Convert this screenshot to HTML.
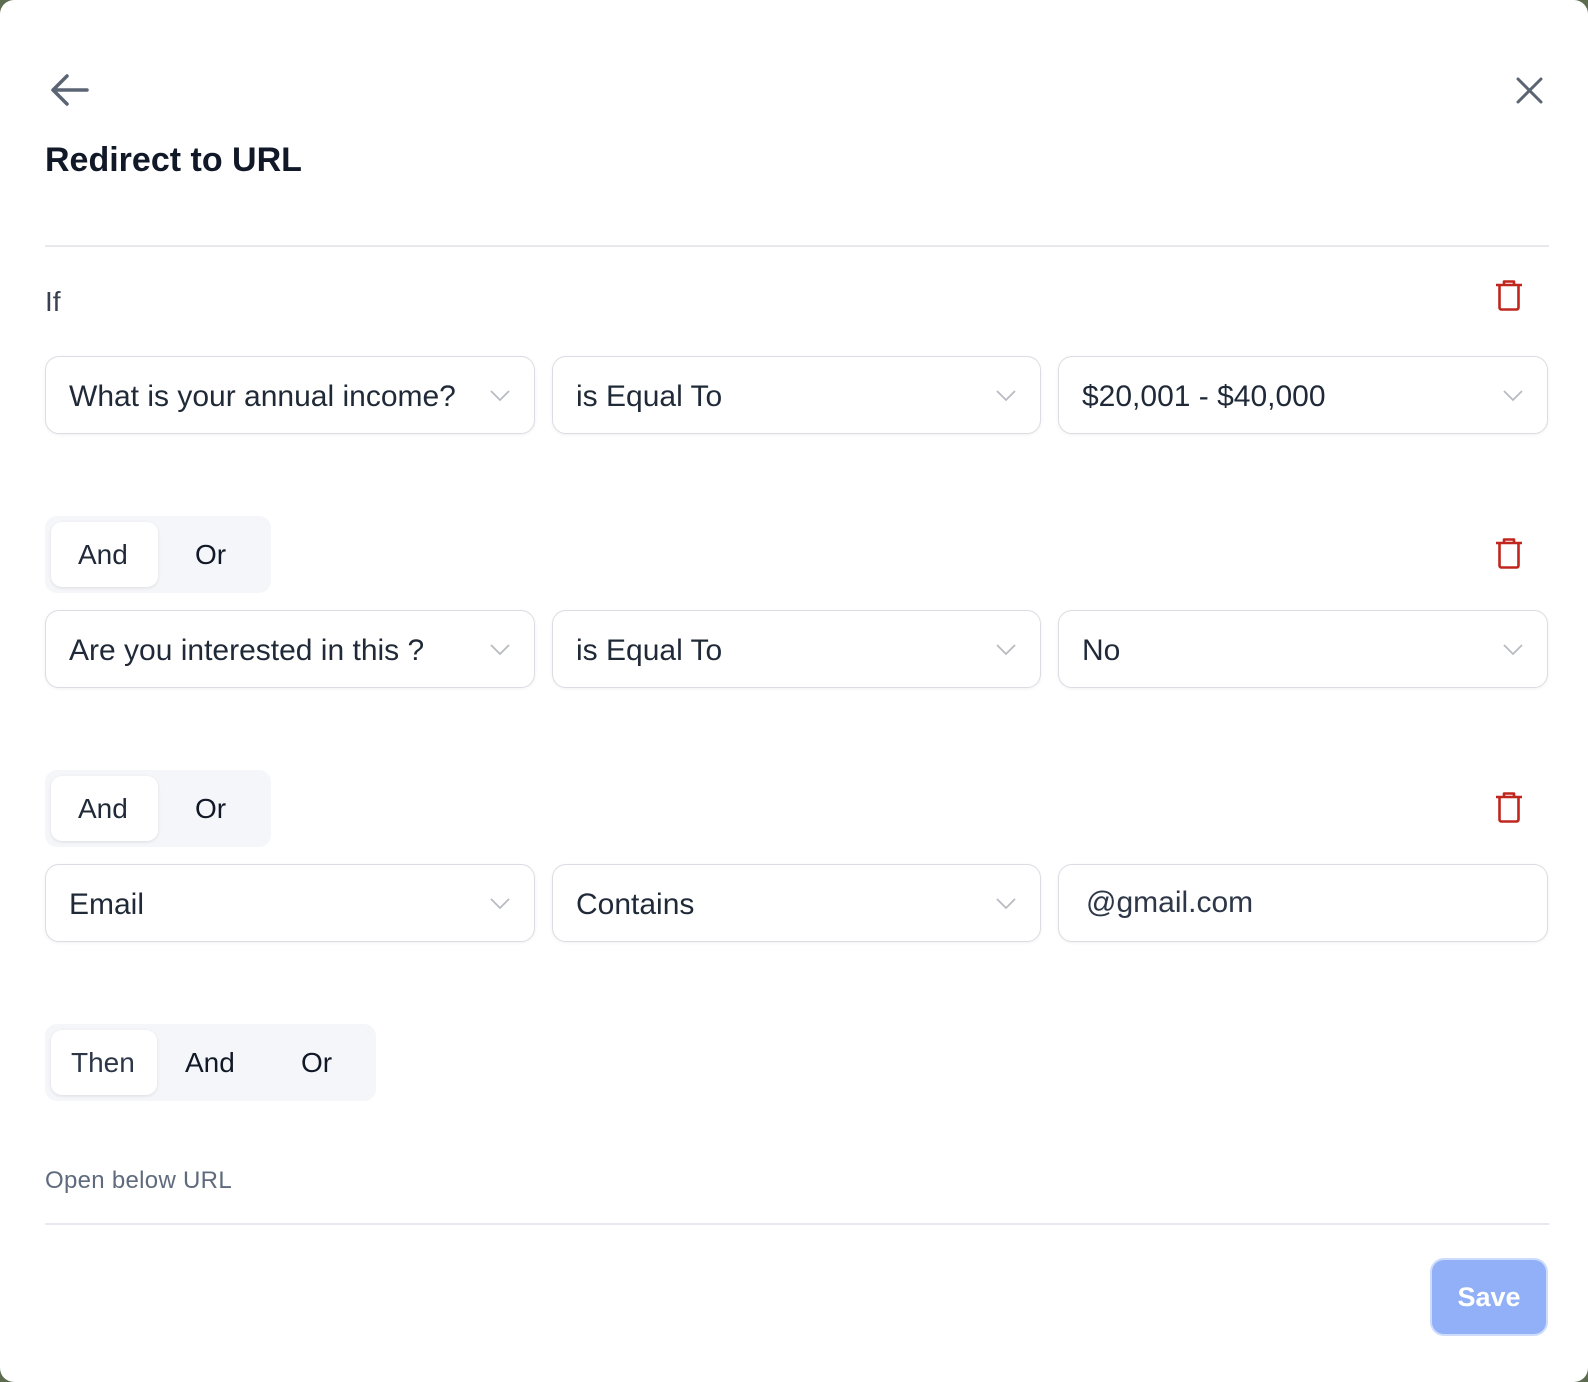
<!DOCTYPE html>
<html><head><meta charset="utf-8"><style>
html,body{margin:0;padding:0;}
body{width:1588px;height:1382px;background:#5d6b4f;position:relative;overflow:hidden;font-family:"Liberation Sans",sans-serif;}
.modal{position:absolute;left:0;top:0;width:1588px;height:1382px;background:#fff;border-radius:14px;}
.a{position:absolute;}
.field{position:absolute;height:78px;border:1.5px solid #dcdde3;border-radius:14px;box-sizing:border-box;box-shadow:0 1px 3px rgba(0,0,0,.06);font-size:30px;color:#1f2937;line-height:80px;padding-left:23px;background:#fff;}
.field svg{position:absolute;right:24px;top:33px;}
.tog{position:absolute;height:77px;background:#f5f6f9;border-radius:12px;}
.pill{position:absolute;top:6px;height:65px;background:#fff;border-radius:11px;box-shadow:0 1px 3px rgba(0,0,0,.1);}
.t{position:absolute;font-size:28px;color:#111827;line-height:77px;top:0;}
.hr{position:absolute;left:45px;width:1504px;height:2px;background:#e8e9ee;}
</style></head><body><div class="modal">
<svg class="a" style="left:48px;top:73px" width="42" height="34" viewBox="0 0 42 34"><path d="M39 17H5M19 3L5 17l14 14" fill="none" stroke="#5b6473" stroke-width="3.5" stroke-linecap="round" stroke-linejoin="round"/></svg>
<svg class="a" style="left:1516px;top:77px" width="27" height="27" viewBox="0 0 27 27"><path d="M2 2L25 25M25 2L2 25" stroke="#5b6473" stroke-width="3" stroke-linecap="round"/></svg>
<div class="a" style="left:45px;top:141px;font-size:34px;font-weight:600;color:#111827">Redirect to URL</div>
<div class="hr" style="top:245px"></div>
<div class="a" style="left:45px;top:286px;font-size:28px;color:#374151">If</div>

<svg class="a" style="left:1495px;top:279px" width="28" height="32" viewBox="0 0 28 32"><path d="M1 6H27M9 6V2.5h10V6M4.5 6V28.5a2 2 0 0 0 2 2h15a2 2 0 0 0 2-2V6" fill="none" stroke="#c0261d" stroke-width="2.6" stroke-linejoin="round"/></svg>
<svg class="a" style="left:1495px;top:537px" width="28" height="32" viewBox="0 0 28 32"><path d="M1 6H27M9 6V2.5h10V6M4.5 6V28.5a2 2 0 0 0 2 2h15a2 2 0 0 0 2-2V6" fill="none" stroke="#c0261d" stroke-width="2.6" stroke-linejoin="round"/></svg>
<svg class="a" style="left:1495px;top:791px" width="28" height="32" viewBox="0 0 28 32"><path d="M1 6H27M9 6V2.5h10V6M4.5 6V28.5a2 2 0 0 0 2 2h15a2 2 0 0 0 2-2V6" fill="none" stroke="#c0261d" stroke-width="2.6" stroke-linejoin="round"/></svg>

<div class="field" style="left:45px;top:356px;width:490px">What is your annual income?<svg width="20" height="12" viewBox="0 0 20 12"><path d="M1 1l9 9 9-9" fill="none" stroke="#b8bbc2" stroke-width="1.8"/></svg></div>
<div class="field" style="left:552px;top:356px;width:489px">is Equal To<svg width="20" height="12" viewBox="0 0 20 12"><path d="M1 1l9 9 9-9" fill="none" stroke="#b8bbc2" stroke-width="1.8"/></svg></div>
<div class="field" style="left:1058px;top:356px;width:490px">$20,001 - $40,000<svg width="20" height="12" viewBox="0 0 20 12"><path d="M1 1l9 9 9-9" fill="none" stroke="#b8bbc2" stroke-width="1.8"/></svg></div>

<div class="tog" style="left:45px;top:516px;width:226px"><div class="pill" style="left:6px;width:107px"></div><div class="t" style="left:33px;color:#1f2937">And</div><div class="t" style="left:150px">Or</div></div>

<div class="field" style="left:45px;top:610px;width:490px">Are you interested in this ?<svg width="20" height="12" viewBox="0 0 20 12"><path d="M1 1l9 9 9-9" fill="none" stroke="#b8bbc2" stroke-width="1.8"/></svg></div>
<div class="field" style="left:552px;top:610px;width:489px">is Equal To<svg width="20" height="12" viewBox="0 0 20 12"><path d="M1 1l9 9 9-9" fill="none" stroke="#b8bbc2" stroke-width="1.8"/></svg></div>
<div class="field" style="left:1058px;top:610px;width:490px">No<svg width="20" height="12" viewBox="0 0 20 12"><path d="M1 1l9 9 9-9" fill="none" stroke="#b8bbc2" stroke-width="1.8"/></svg></div>

<div class="tog" style="left:45px;top:770px;width:226px"><div class="pill" style="left:6px;width:107px"></div><div class="t" style="left:33px;color:#1f2937">And</div><div class="t" style="left:150px">Or</div></div>

<div class="field" style="left:45px;top:864px;width:490px">Email<svg width="20" height="12" viewBox="0 0 20 12"><path d="M1 1l9 9 9-9" fill="none" stroke="#b8bbc2" stroke-width="1.8"/></svg></div>
<div class="field" style="left:552px;top:864px;width:489px">Contains<svg width="20" height="12" viewBox="0 0 20 12"><path d="M1 1l9 9 9-9" fill="none" stroke="#b8bbc2" stroke-width="1.8"/></svg></div>
<div class="field" style="left:1058px;top:864px;width:490px;padding-left:27px;color:#2d3748;line-height:76px">@gmail.com</div>

<div class="tog" style="left:45px;top:1024px;width:331px"><div class="pill" style="left:6px;width:106px"></div><div class="t" style="left:26px;color:#2d3748">Then</div><div class="t" style="left:140px">And</div><div class="t" style="left:256px">Or</div></div>

<div class="a" style="left:45px;top:1167px;font-size:24px;color:#5f6b7d;letter-spacing:.3px">Open below URL</div>
<div class="hr" style="top:1223px"></div>

<div class="a" style="left:1430px;top:1258px;width:118px;height:78px;box-sizing:border-box;background:#91b0f7;border:2px solid #cddcfb;border-radius:14px;color:#fff;font-size:27px;font-weight:bold;text-align:center;line-height:74px">Save</div>
</div></body></html>
